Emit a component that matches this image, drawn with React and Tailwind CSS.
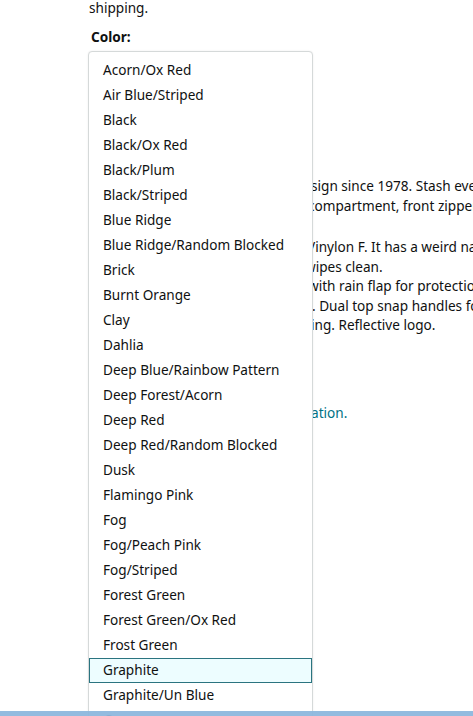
import React from "react";

const colors = [
  "Acorn/Ox Red",
  "Air Blue/Striped",
  "Black",
  "Black/Ox Red",
  "Black/Plum",
  "Black/Striped",
  "Blue Ridge",
  "Blue Ridge/Random Blocked",
  "Brick",
  "Burnt Orange",
  "Clay",
  "Dahlia",
  "Deep Blue/Rainbow Pattern",
  "Deep Forest/Acorn",
  "Deep Red",
  "Deep Red/Random Blocked",
  "Dusk",
  "Flamingo Pink",
  "Fog",
  "Fog/Peach Pink",
  "Fog/Striped",
  "Forest Green",
  "Forest Green/Ox Red",
  "Frost Green",
  "Graphite",
  "Graphite/Un Blue",
  "Gray",
  "Green",
];

export default function App() {
  return (
    <div
      className="relative h-[716px] w-[473px] overflow-hidden bg-white text-[13.6px] text-[#0f1111]"
      style={{ fontFamily: '"Noto Sans", "Open Sans", sans-serif' }}
    >
      <div className="relative pt-[1px]">
        <div className="pl-[89px] leading-[20px] -mt-[3px] whitespace-nowrap">shipping.</div>
        <div className="pl-[91px] mt-[9px] font-bold leading-[20px]">Color:</div>

        <div className="mt-[129px] leading-[19.5px] whitespace-nowrap">
          <div className="pl-[311px]">sign since 1978. Stash everything</div>
          <div className="pl-[308px]">compartment, front zipper pocket</div>
          <div className="pl-[307px] mt-[22px]">Vinylon F. It has a weird name</div>
          <div className="pl-[305px]">wipes clean.</div>
          <div className="pl-[308px]">with rain flap for protection</div>
          <div className="pl-[312px]">. Dual top snap handles for</div>
          <div className="pl-[311px]">ing. Reflective logo.</div>
          <div className="pl-[311px] mt-[68px] text-[#007185]">ation.</div>
        </div>

        <div className="absolute left-[88px] top-[51px] w-[225px] rounded-t-[4px] border border-[#d5d9d9] bg-white pt-[6px] shadow-[0_0_2px_rgba(0,0,0,0.08)]">
          {colors.map((c) => {
            const selected = c === "Graphite";
            return (
              <div
                key={c}
                className={
                  selected
                    ? "h-[25px] flex items-center border border-[#2a7480] bg-[#edfdff] pl-[13px] whitespace-nowrap"
                    : "h-[25px] flex items-center border border-transparent pl-[13px] whitespace-nowrap"
                }
              >
                {c}
              </div>
            );
          })}
        </div>
      </div>

      <div className="absolute bottom-0 left-0 right-0 h-[5px] bg-[#8db7dd]/95" />
    </div>
  );
}
